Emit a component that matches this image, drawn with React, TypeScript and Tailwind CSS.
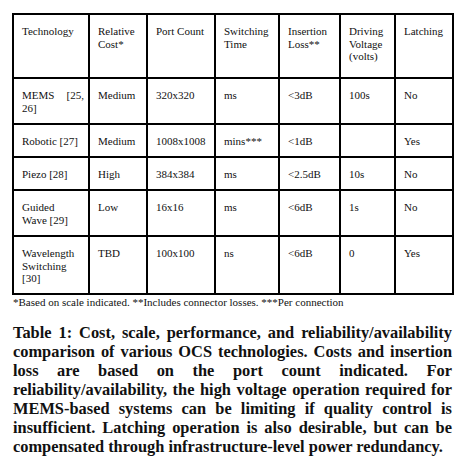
const HEAD = [
  ["Technology"],
  ["Relative", "Cost*"],
  ["Port Count"],
  ["Switching", "Time"],
  ["Insertion", "Loss**"],
  ["Driving", "Voltage", "(volts)"],
  ["Latching"],
];

const ROWS: { h: string; cells: string[][] }[] = [
  { h: "h-[46px]", cells: [["MEMS [25,", "26]"], ["Medium"], ["320x320"], ["ms"], ["<3dB"], ["100s"], ["No"]] },
  { h: "h-[33px]", cells: [["Robotic [27]"], ["Medium"], ["1008x1008"], ["mins***"], ["<1dB"], [""], ["Yes"]] },
  { h: "h-[33px]", cells: [["Piezo [28]"], ["High"], ["384x384"], ["ms"], ["<2.5dB"], ["10s"], ["No"]] },
  { h: "h-[46px]", cells: [["Guided", "Wave [29]"], ["Low"], ["16x16"], ["ms"], ["<6dB"], ["1s"], ["No"]] },
  { h: "h-[58px]", cells: [["Wavelength", "Switching", "[30]"], ["TBD"], ["100x100"], ["ns"], ["<6dB"], ["0"], ["Yes"]] },
];

const WIDTHS = ["w-[76px]", "w-[58px]", "w-[68px]", "w-[64px]", "w-[61px]", "w-[55px]", "w-[58px]"];

const CAPTION = [
  "Table 1: Cost, scale, performance, and reliability/availability",
  "comparison of various OCS technologies. Costs and insertion",
  "loss are based on the port count indicated. For",
  "reliability/availability, the high voltage operation required for",
  "MEMS-based systems can be limiting if quality control is",
  "insufficient. Latching operation is also desirable, but can be",
];

function Cell({ lines }: { lines: string[] }) {
  return (
    <td className="border-2 border-black align-top pl-[8px] pr-[4px] pt-[10px] text-[11px] leading-[12.5px]">
      {lines.map((l, i) => (
        <div key={i} className={lines[0] === "MEMS [25," && i === 0 ? "flex justify-between" : ""}>
          {lines[0] === "MEMS [25," && i === 0 ? (
            <>
              <span>MEMS</span>
              <span>[25,</span>
            </>
          ) : (
            l
          )}
        </div>
      ))}
    </td>
  );
}

export default function App() {
  return (
    <div className="w-[474px] h-[463px] bg-white text-[#111] font-[Liberation_Serif,Times_New_Roman,serif] pt-[13px] pl-[12px]">
      <table className="table-fixed border-collapse w-[442px]">
        <colgroup>
          {WIDTHS.map((w, i) => (
            <col key={i} className={w} />
          ))}
        </colgroup>
        <tbody>
          <tr className="h-[64px]">
            {HEAD.map((c, i) => (
              <Cell key={i} lines={c} />
            ))}
          </tr>
          {ROWS.map((r, i) => (
            <tr key={i} className={r.h}>
              {r.cells.map((c, j) => (
                <Cell key={j} lines={c} />
              ))}
            </tr>
          ))}
        </tbody>
      </table>
      <p className="text-[11px] leading-[12px] mt-[1px] pl-[1px]">
        *Based on scale indicated. **Includes connector losses. ***Per connection
      </p>
      <div className="mt-[15px] w-[440px] pl-[1px] font-bold text-[16.4px] leading-[19px]">
        {CAPTION.map((l, i) => (
          <div key={i} className="text-justify [text-align-last:justify]">
            {l}
          </div>
        ))}
        <div>compensated through infrastructure-level power redundancy.</div>
      </div>
    </div>
  );
}
